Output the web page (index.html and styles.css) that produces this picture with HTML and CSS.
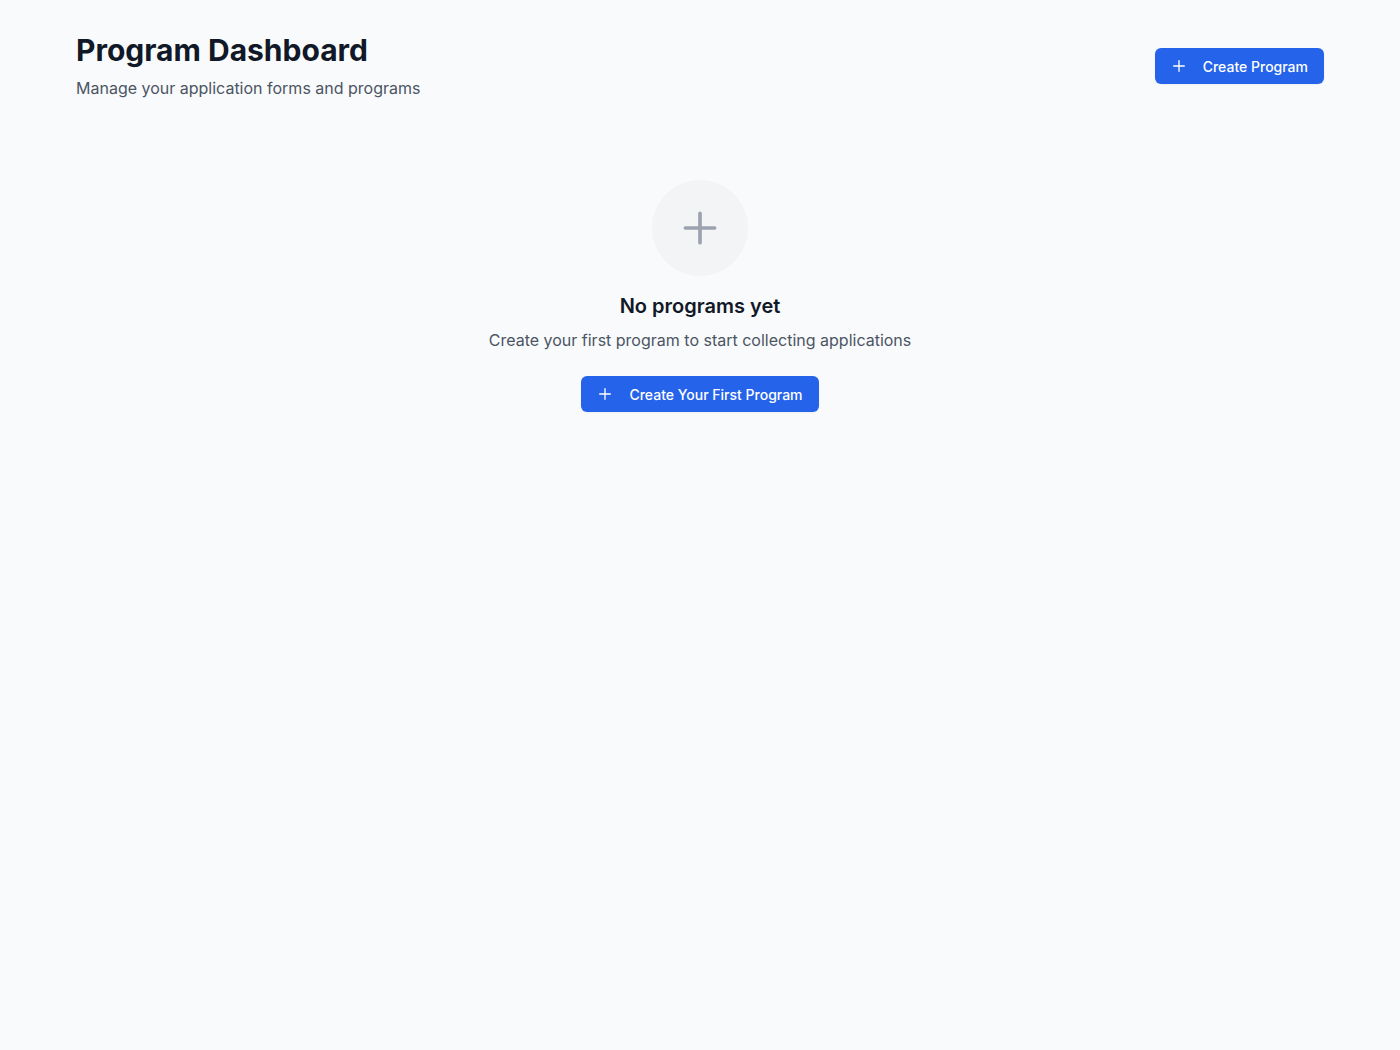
FILE: index.html
```html
<!DOCTYPE html>
<html lang="en">
<head>
  <meta charset="UTF-8">
  <meta name="viewport" content="width=device-width, initial-scale=1.0">
  <title>Program Dashboard</title>
  <link rel="stylesheet" href="styles.css">
</head>
<body>

  <div class="page">
    <header class="page-header">
      <div class="heading">
        <h1>Program Dashboard</h1>
        <p>Manage your application forms and programs</p>
      </div>
      <button class="btn">
        <svg class="btn-icon" viewBox="0 0 24 24" fill="none" stroke="currentColor" stroke-width="2" stroke-linecap="round" stroke-linejoin="round"><path d="M12 4v16m8-8H4"/></svg>
        Create Program
      </button>
    </header>

    <!-- Empty state -->
    <main class="empty">
      <div class="empty-icon">
        <svg viewBox="0 0 24 24" fill="none" stroke="currentColor" stroke-width="2" stroke-linecap="round" stroke-linejoin="round"><path d="M12 4v16m8-8H4"/></svg>
      </div>
      <h2>No programs yet</h2>
      <p>Create your first program to start collecting applications</p>
      <button class="btn">
        <svg class="btn-icon" viewBox="0 0 24 24" fill="none" stroke="currentColor" stroke-width="2" stroke-linecap="round" stroke-linejoin="round"><path d="M12 4v16m8-8H4"/></svg>
        Create Your First Program
      </button>
    </main>
  </div>

</body>
</html>
```

FILE: styles.css
```css
* {
  margin: 0;
  padding: 0;
  box-sizing: border-box;
}

body {
  font-family: 'Inter', 'Noto Sans', sans-serif;
  background-color: #f9fafb;
  color: #111827;
  min-height: 100vh;
}

.page {
  max-width: 1280px;
  margin: 0 auto;
  padding: 32px 16px;
}

.page-header {
  display: flex;
  justify-content: space-between;
  align-items: center;
  margin-bottom: 32px;
}

.heading h1 {
  font-size: 30px;
  line-height: 36px;
  font-weight: 700;
  color: #111827;
}

.heading p {
  margin-top: 8px;
  font-size: 16px;
  line-height: 24px;
  color: #4b5563;
}

.btn {
  display: inline-flex;
  align-items: center;
  gap: 16px;
  height: 36px;
  padding: 0 16px;
  font-family: inherit;
  font-size: 14px;
  font-weight: 500;
  color: #fff;
  background-color: #2563eb;
  border: none;
  border-radius: 6px;
  box-shadow: 0 1px 2px rgba(0, 0, 0, 0.05);
  cursor: pointer;
}

.btn:hover {
  background-color: #1d4ed8;
}

.btn-icon {
  width: 16px;
  height: 16px;
}

/* Empty state */
.empty {
  display: flex;
  flex-direction: column;
  align-items: center;
  text-align: center;
  padding: 48px 0;
}

.empty-icon {
  width: 96px;
  height: 96px;
  border-radius: 50%;
  background-color: #f3f4f6;
  color: #9ca3af;
  display: flex;
  align-items: center;
  justify-content: center;
  margin-bottom: 16px;
}

.empty-icon svg {
  width: 44px;
  height: 44px;
}

.empty h2 {
  font-size: 20px;
  line-height: 28px;
  font-weight: 600;
  color: #111827;
}

.empty p {
  margin-top: 8px;
  font-size: 16px;
  line-height: 24px;
  color: #4b5563;
}

.empty .btn {
  margin-top: 24px;
}
```
